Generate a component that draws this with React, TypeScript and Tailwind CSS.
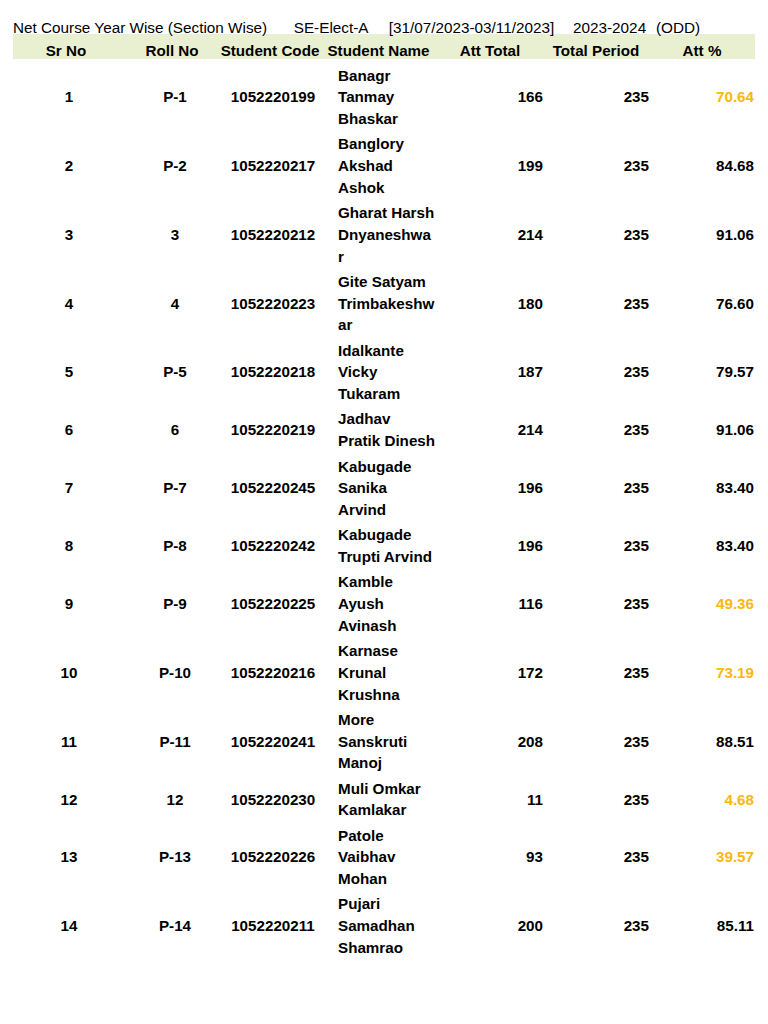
const rows = [
  { sr: 1, roll: "P-1", code: "1052220199", name: ["Banagr", "Tanmay", "Bhaskar"], att: 166, pct: "70.64" },
  { sr: 2, roll: "P-2", code: "1052220217", name: ["Banglory", "Akshad", "Ashok"], att: 199, pct: "84.68" },
  { sr: 3, roll: "3", code: "1052220212", name: ["Gharat Harsh", "Dnyaneshwa", "r"], att: 214, pct: "91.06" },
  { sr: 4, roll: "4", code: "1052220223", name: ["Gite Satyam", "Trimbakeshw", "ar"], att: 180, pct: "76.60" },
  { sr: 5, roll: "P-5", code: "1052220218", name: ["Idalkante", "Vicky", "Tukaram"], att: 187, pct: "79.57" },
  { sr: 6, roll: "6", code: "1052220219", name: ["Jadhav", "Pratik Dinesh"], att: 214, pct: "91.06" },
  { sr: 7, roll: "P-7", code: "1052220245", name: ["Kabugade", "Sanika", "Arvind"], att: 196, pct: "83.40" },
  { sr: 8, roll: "P-8", code: "1052220242", name: ["Kabugade", "Trupti Arvind"], att: 196, pct: "83.40" },
  { sr: 9, roll: "P-9", code: "1052220225", name: ["Kamble", "Ayush", "Avinash"], att: 116, pct: "49.36" },
  { sr: 10, roll: "P-10", code: "1052220216", name: ["Karnase", "Krunal", "Krushna"], att: 172, pct: "73.19" },
  { sr: 11, roll: "P-11", code: "1052220241", name: ["More", "Sanskruti", "Manoj"], att: 208, pct: "88.51" },
  { sr: 12, roll: "12", code: "1052220230", name: ["Muli Omkar", "Kamlakar"], att: 11, pct: "4.68" },
  { sr: 13, roll: "P-13", code: "1052220226", name: ["Patole", "Vaibhav", "Mohan"], att: 93, pct: "39.57" },
  { sr: 14, roll: "P-14", code: "1052220211", name: ["Pujari", "Samadhan", "Shamrao"], att: 200, pct: "85.11" },
];

const cols = "grid grid-cols-[repeat(7,106px)]";

export default function App() {
  return (
    <div className="min-h-screen bg-white pl-[13px] pt-[22px] font-['Liberation_Sans',Arial,sans-serif] text-black">
      {/* report title line */}
      <div className="flex h-[12px] whitespace-nowrap text-[15.3px] leading-[12px]">
        <span className="w-[280.7px]">Net Course Year Wise (Section Wise)</span>
        <span className="w-[95px]">SE-Elect-A</span>
        <span className="w-[184.3px]">[31/07/2023-03/11/2023]</span>
        <span className="w-[83px]">2023-2024</span>
        <span>(ODD)</span>
      </div>

      <div className={`${cols} h-[25px] w-[742px] bg-[#e9f0d1] pt-[8.5px] text-[15.2px] font-bold leading-[16px] whitespace-nowrap`}>
        <div className="text-center">Sr No</div>
        <div className="text-center">Roll No</div>
        <div className="flex justify-center pr-[16px]">Student Code</div>
        <div className="flex justify-center pr-[11px]">Student Name</div>
        <div className="text-center">Att Total</div>
        <div className="text-center">Total Period</div>
        <div className="text-center">Att %</div>
      </div>

      <div className="mt-[3.8px] w-[742px] text-[15.2px] font-bold leading-[21.75px]">
        {rows.map((r) => (
          <div key={r.sr} className={`${cols} items-center py-[1.775px]`}>
            <div className="pl-[6px] text-center">{r.sr}</div>
            <div className="pl-[6px] text-center">{r.roll}</div>
            <div className="pr-[10px] text-center">{r.code}</div>
            <div className="pl-[7px] whitespace-nowrap">
              {r.name.map((n) => (
                <div key={n}>{n}</div>
              ))}
            </div>
            <div className="text-right">{r.att}</div>
            <div className="text-right">235</div>
            <div className={`pr-[1px] text-right ${parseFloat(r.pct) < 75 ? "text-[#fbb70e]" : ""}`}>{r.pct}</div>
          </div>
        ))}
      </div>
    </div>
  );
}
